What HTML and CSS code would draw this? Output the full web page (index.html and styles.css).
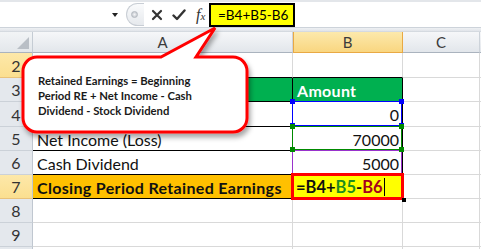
FILE: index.html
```html
<!DOCTYPE html>
<html>
<head>
<meta charset="utf-8">
<link rel="stylesheet" href="styles.css">
</head>
<body>
<div class="toolbar">
  <div class="namebox"><span class="dd"></span></div>
  <div class="grip"><span class="dot"></span></div>
  <div class="icons">
    <svg class="ic" width="12" height="12" viewBox="0 0 12 12"><path d="M2 2 L10 10 M10 2 L2 10" stroke="#333" stroke-width="2.2" stroke-linecap="round"/></svg>
    <svg class="ic" width="14" height="12" viewBox="0 0 14 12"><path d="M1.5 6.5 L5 10 L12.5 1.5" stroke="#333" stroke-width="2.4" fill="none" stroke-linecap="round" stroke-linejoin="round"/></svg>
    <span class="fx">f<span class="fxs">x</span></span>
  </div>
  <div class="formula"><span class="fbox">=B4+B5-B6</span></div>
</div>
<div class="band"></div>
<div class="sheet">
  <div class="corner"><span class="tri"></span></div>
  <div class="ch">A</div>
  <div class="ch sel">B</div>
  <div class="ch">C</div>
  <div class="ch end"></div>

  <div class="rh sel">2</div>
  <div class="c tb"></div>
  <div class="c tb"></div>
  <div class="c"></div>
  <div class="c end"></div>

  <div class="rh">3</div>
  <div class="c tb tr green"></div>
  <div class="c tb tr green amt">Amount</div>
  <div class="c"></div>
  <div class="c end"></div>

  <div class="rh">4</div>
  <div class="c tb tr"></div>
  <div class="c num ref ref-blue"><span class="sq"></span>0</div>
  <div class="c"></div>
  <div class="c end"></div>

  <div class="rh">5</div>
  <div class="c tb tr">Net Income (Loss)</div>
  <div class="c num ref ref-green"><span class="sq"></span>70000</div>
  <div class="c"></div>
  <div class="c end"></div>

  <div class="rh">6</div>
  <div class="c tb tr">Cash Dividend</div>
  <div class="c num ref ref-purple">5000</div>
  <div class="c"></div>
  <div class="c end"></div>

  <div class="rh sel">7</div>
  <div class="c tb tr orange">Closing Period Retained Earnings</div>
  <div class="c active"><span class="k">=B4+</span><span class="g">B5</span><span class="k">-</span><span class="r">B6</span><span class="caret"></span></div>
  <div class="c"></div>
  <div class="c end"></div>

  <div class="rh">8</div>
  <div class="c"></div>
  <div class="c"></div>
  <div class="c"></div>
  <div class="c end"></div>

  <div class="rh">9</div>
  <div class="c"></div>
  <div class="c"></div>
  <div class="c"></div>
  <div class="c end"></div>

  <div class="rh"></div>
  <div class="c"></div>
  <div class="c"></div>
  <div class="c"></div>
  <div class="c end"></div>
</div>

<div class="callout">
  <svg class="bubble" width="481" height="249" viewBox="0 0 481 249">
    <defs>
      <filter id="sh" x="-10%" y="-10%" width="130%" height="140%">
        <feDropShadow dx="2" dy="4" stdDeviation="2.5" flood-color="#000" flood-opacity="0.35"/>
      </filter>
    </defs>
    <path d="M37 57 H161 L215 28 L196 57 H233 A14 14 0 0 1 247 71 V118 A14 14 0 0 1 233 132 H37 A14 14 0 0 1 23 118 V71 A14 14 0 0 1 37 57 Z" fill="#fff" stroke="#ff0000" stroke-width="3" stroke-linejoin="miter" filter="url(#sh)"/>
  </svg>
  <div class="note">Retained Earnings = Beginning<br>Period RE + Net Income - Cash<br>Dividend - Stock Dividend</div>
</div>
</body>
</html>
```

FILE: styles.css
```css
* { box-sizing: border-box; margin: 0; padding: 0; }
html, body { width: 481px; height: 249px; overflow: hidden; background: #fff; }
body { position: relative; font-family: Lato, "Liberation Sans", sans-serif; color: #111; }

.toolbar {
  height: 28px;
  display: flex;
  align-items: stretch;
  border-top: 2px solid #e3e6ea;
  border-bottom: 1px solid #cdd3da;
  background: #fff;
}
.namebox {
  width: 126px;
  display: flex;
  align-items: center;
  justify-content: flex-end;
  padding-right: 8px;
}
.dd {
  width: 0; height: 0;
  border-left: 3.5px solid transparent;
  border-right: 3.5px solid transparent;
  border-top: 4px solid #222;
}
.grip {
  width: 18px;
  margin: 1px 0;
  border: 1px solid #c9ced5;
  border-right: none;
  border-radius: 12px 0 0 12px;
  background: linear-gradient(#fafbfc, #e6e9ed);
  display: flex;
  align-items: center;
  justify-content: center;
  padding-right: 3px;
}
.dot { width: 7px; height: 7px; border-radius: 50%; background: radial-gradient(#f4f5f7, #b7bcc3); border: 1px solid #b4b9c0; }
.icons {
  width: 65px;
  display: flex;
  align-items: center;
  gap: 9px;
  padding-left: 7px;
}
.ic { display: block; }
.fx {
  font-family: "Liberation Serif", serif;
  font-style: italic;
  font-size: 16px;
  color: #333;
  line-height: 1;
  margin-left: 1px;
}
.fxs { font-size: 11px; }
.formula {
  flex: 1;
  display: flex;
  align-items: center;
}
.fbox {
  display: inline-flex;
  align-items: center;
  height: 24px;
  width: 86px;
  padding-left: 7px;
  background: #ffff00;
  border: 2px solid #000;
  font-size: 13.5px;
  color: #000;
  white-space: nowrap;
}

.band { height: 4px; background: linear-gradient(#eef0f3, #e1e5ea); border-bottom: 1px solid #d5dae0; }

.sheet {
  display: grid;
  grid-template-columns: 33px 260px 110px 77px 1fr;
  grid-template-rows: 21px 25px 24px 25px 24px 24px 24px 24px 24px 24px;
}
.corner {
  background: linear-gradient(#f2f4f6, #e3e7eb);
  border-right: 1px solid #c5ccd4;
  border-bottom: 1px solid #aab3be;
  position: relative;
}
.tri {
  position: absolute;
  right: 3px; bottom: 3px;
  width: 0; height: 0;
  border-left: 12px solid transparent;
  border-bottom: 12px solid #b9bfc6;
}
.ch {
  background: linear-gradient(#f6f7f9, #e2e6eb);
  border-right: 1px solid #cdd3da;
  border-bottom: 1px solid #aab3be;
  display: flex;
  align-items: center;
  justify-content: center;
  font-size: 15px;
  color: #3b3b3b;
}
.ch.sel {
  background: linear-gradient(#fce9ac, #f9d680);
  border-right: 1px solid #e9a944;
  border-bottom: 1px solid #e9a944;
  box-shadow: inset 1px 0 0 #e9a944;
}
.ch.end { border-right: none; }
.rh {
  background: #e4e8ed;
  border-right: 1px solid #c0c7d0;
  border-bottom: 1px solid #cbd1d8;
  display: flex;
  align-items: center;
  justify-content: center;
  font-size: 16px;
  color: #333;
}
.rh.sel { background: linear-gradient(#fde8a9, #fbdf90); border-bottom-color: #e9c27a; }

.c {
  position: relative;
  border-right: 1px solid #d9d9d9;
  border-bottom: 1px solid #d9d9d9;
  display: flex;
  align-items: center;
  padding: 1px 4px 0;
  font-size: 16px;
  white-space: nowrap;
  color: #111;
}
.c.end { border-right: none; }
.tb { border-bottom-color: #000; }
.tr { border-right-color: #000; }
.green { background: #00b050; }
.amt { color: #fff; font-weight: 700; padding-left: 4px; letter-spacing: 0.3px; }
.orange { background: #ffc000; font-weight: 700; letter-spacing: 0.33px; }
.num { justify-content: flex-end; padding-right: 3px; border-right-color: #000; border-bottom-color: #000; }

.ref::after {
  content: "";
  position: absolute;
  left: -1px; top: -1px; right: 0; bottom: 0;
  border: 1px solid var(--rc);
  z-index: 1;
}
.sq {
  position: absolute;
  left: -3px; top: -3px; right: -2px; bottom: -2px;
  z-index: 3;
  background:
    linear-gradient(var(--rc), var(--rc)) left top / 5px 5px no-repeat,
    linear-gradient(var(--rc), var(--rc)) right top / 5px 5px no-repeat,
    linear-gradient(var(--rc), var(--rc)) left bottom / 5px 5px no-repeat,
    linear-gradient(var(--rc), var(--rc)) right bottom / 5px 5px no-repeat;
}
.ref-blue { --rc: #0000ff; }
.ref-green { --rc: #008a00; }
.ref-purple { --rc: #9933cc; }

.active {
  background: #ffff00;
  font-weight: 700;
  padding-left: 3px;
  font-size: 16.5px;
}
.active::after {
  content: "";
  position: absolute;
  left: -2px; top: -2px; right: -2px; bottom: -2px;
  border: 3px solid #ff0000;
  z-index: 2;
}
.active::before {
  content: "";
  position: absolute;
  right: -4px; bottom: -4px;
  width: 4px; height: 4px;
  background: #000;
  z-index: 3;
}
.k { color: #111; }
.g { color: #1e8c1e; }
.r { color: #a5001e; }
.caret { display: inline-block; width: 1px; height: 18px; background: #000; margin-left: 1px; }

.callout {
  position: absolute;
  left: 0; top: 0;
  width: 481px; height: 249px;
  pointer-events: none;
  z-index: 5;
}
.bubble { position: absolute; left: 0; top: 0; }
.note {
  position: absolute;
  left: 38px; top: 73px;
  font-size: 11.3px;
  font-weight: 700;
  line-height: 15px;
  color: #1a1a1a;
  white-space: nowrap;
}
```
